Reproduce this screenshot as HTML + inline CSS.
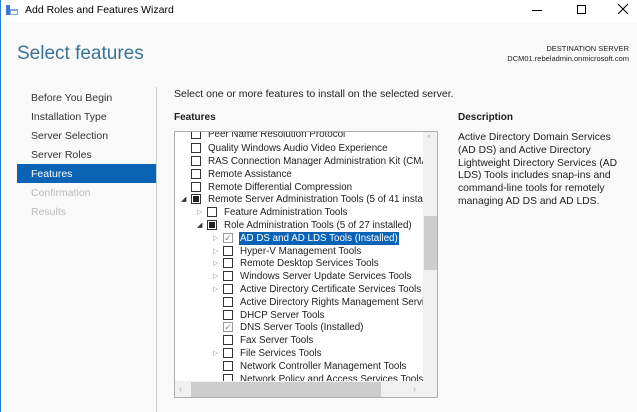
<!DOCTYPE html>
<html><head><style>
*{margin:0;padding:0;box-sizing:border-box}
body{width:637px;height:412px;background:#fff;font-family:"Liberation Sans",sans-serif;font-size:10.5px;color:#1e1e1e;position:relative;overflow:hidden}
.a{position:absolute;white-space:nowrap}
.nav{position:absolute;left:31px;font-size:10.5px;color:#333}
.row{position:absolute;height:13px;line-height:13px;white-space:nowrap;font-size:9.8px}
.cb{position:absolute;width:10px;height:10px;border:1px solid #333;background:#fff;top:1px}
.cb.f::after{content:"";position:absolute;left:1px;top:1px;width:6px;height:6px;background:#222}
.cb.g{border-color:#999}
.ar{position:absolute;top:0;font-size:7px;color:#999}
.ar.o{color:#333}
</style></head><body>
<div class="a" style="left:0;top:0;width:1px;height:412px;background:#2b7cd3"></div>
<div class="a" style="left:1px;top:0;width:636px;height:22px;background:#fff"></div>
<svg class="a" style="left:6px;top:5px" width="12" height="11"><rect x="0" y="0" width="4" height="10" fill="#3a7bc8"/><rect x="4" y="4" width="8" height="6" fill="#7aa6d8"/><rect x="5" y="6" width="6" height="3" fill="#fff"/></svg>
<div class="a" style="left:25px;top:4px;font-size:10.5px;color:#000">Add Roles and Features Wizard</div>
<div class="a" style="left:532px;top:10px;width:10px;height:1px;background:#000"></div>
<div class="a" style="left:577px;top:5px;width:9px;height:9px;border:1px solid #000"></div>
<svg class="a" style="left:618px;top:4px" width="10" height="10"><path d="M0 0L10 10M10 0L0 10" stroke="#000" stroke-width="1"/></svg>
<div class="a" style="left:1px;top:22px;width:636px;height:390px;background:#f9f9f9"></div>
<div class="a" style="left:17px;top:43px;font-size:19px;color:#3a7396">Select features</div>
<div class="a" style="right:8px;top:44px;font-size:7.5px;text-align:right;line-height:10px;color:#222">DESTINATION SERVER<br>DCM01.rebeladmin.onmicrosoft.com</div>
<div class="nav" style="top:92px">Before You Begin</div>
<div class="nav" style="top:111px">Installation Type</div>
<div class="nav" style="top:130px">Server Selection</div>
<div class="nav" style="top:149px">Server Roles</div>
<div class="a" style="left:17px;top:164px;width:139px;height:19px;background:#0b63b6"></div>
<div class="nav" style="top:168px;color:#fff">Features</div>
<div class="nav" style="top:187px;color:#bbb">Confirmation</div>
<div class="nav" style="top:206px;color:#bbb">Results</div>
<div class="a" style="left:156px;top:87px;width:1px;height:325px;background:#ccc"></div>
<div class="a" style="left:174px;top:88px">Select one or more features to install on the selected server.</div>
<div class="a" style="left:174px;top:112px;font-weight:bold;font-size:10px">Features</div>
<div class="a" style="left:458px;top:112px;font-weight:bold;font-size:10px">Description</div>
<div class="a" style="left:458px;top:132px;line-height:12.8px;font-size:10.3px">Active Directory Domain Services<br>(AD DS) and Active Directory<br>Lightweight Directory Services (AD<br>LDS) Tools includes snap-ins and<br>command-line tools for remotely<br>managing AD DS and AD LDS.</div>
<div class="a" style="left:174px;top:131px;width:264px;height:267px;border:1px solid #adadad;background:#fff;overflow:hidden">
<div style="position:absolute;left:0;top:0;width:248px;height:249px;overflow:hidden">
<div class="row" style="top:-4px;left:16px"><span class="cb" style="left:0"></span><span style="position:absolute;left:17px">Peer Name Resolution Protocol</span></div>
<div class="row" style="top:10px;left:16px"><span class="cb"></span><span style="position:absolute;left:17px">Quality Windows Audio Video Experience</span></div>
<div class="row" style="top:23px;left:16px"><span class="cb"></span><span style="position:absolute;left:17px">RAS Connection Manager Administration Kit (CMAK)</span></div>
<div class="row" style="top:36px;left:16px"><span class="cb"></span><span style="position:absolute;left:17px">Remote Assistance</span></div>
<div class="row" style="top:49px;left:16px"><span class="cb"></span><span style="position:absolute;left:17px">Remote Differential Compression</span></div>
<div class="row" style="top:61px;left:6px"><span class="ar o" style="left:0">◢</span><span class="cb f" style="left:10px"></span><span style="position:absolute;left:27px">Remote Server Administration Tools (5 of 41 installed)</span></div>
<div class="row" style="top:74px;left:22px"><span class="ar" style="left:0">▷</span><span class="cb" style="left:10px"></span><span style="position:absolute;left:27px">Feature Administration Tools</span></div>
<div class="row" style="top:87px;left:22px"><span class="ar o" style="left:0">◢</span><span class="cb f" style="left:10px"></span><span style="position:absolute;left:27px">Role Administration Tools (5 of 27 installed)</span></div>
<div class="row" style="top:100px;left:38px"><span class="ar" style="left:0">▷</span><span class="cb g" style="left:10px;font-size:9px;line-height:8px;color:#888;text-align:center">✓</span><span style="position:absolute;left:26px;top:0;background:#0b63b6;color:#fff;padding:0 1px;height:13px">AD DS and AD LDS Tools (Installed)</span></div>
<div class="row" style="top:113px;left:38px"><span class="ar" style="left:0">▷</span><span class="cb" style="left:10px"></span><span style="position:absolute;left:27px">Hyper-V Management Tools</span></div>
<div class="row" style="top:125px;left:38px"><span class="ar" style="left:0">▷</span><span class="cb" style="left:10px"></span><span style="position:absolute;left:27px">Remote Desktop Services Tools</span></div>
<div class="row" style="top:138px;left:38px"><span class="ar" style="left:0">▷</span><span class="cb" style="left:10px"></span><span style="position:absolute;left:27px">Windows Server Update Services Tools</span></div>
<div class="row" style="top:151px;left:38px"><span class="ar" style="left:0">▷</span><span class="cb" style="left:10px"></span><span style="position:absolute;left:27px">Active Directory Certificate Services Tools</span></div>
<div class="row" style="top:164px;left:38px"><span class="cb" style="left:10px"></span><span style="position:absolute;left:27px">Active Directory Rights Management Services Tools</span></div>
<div class="row" style="top:177px;left:38px"><span class="cb" style="left:10px"></span><span style="position:absolute;left:27px">DHCP Server Tools</span></div>
<div class="row" style="top:189px;left:38px"><span class="cb g" style="left:10px;font-size:9px;line-height:8px;color:#888;text-align:center">✓</span><span style="position:absolute;left:27px">DNS Server Tools (Installed)</span></div>
<div class="row" style="top:202px;left:38px"><span class="cb" style="left:10px"></span><span style="position:absolute;left:27px">Fax Server Tools</span></div>
<div class="row" style="top:215px;left:38px"><span class="ar" style="left:0">▷</span><span class="cb" style="left:10px"></span><span style="position:absolute;left:27px">File Services Tools</span></div>
<div class="row" style="top:228px;left:38px"><span class="cb" style="left:10px"></span><span style="position:absolute;left:27px">Network Controller Management Tools</span></div>
<div class="row" style="top:241px;left:38px"><span class="cb" style="left:10px"></span><span style="position:absolute;left:27px">Network Policy and Access Services Tools</span></div>
</div>
<div style="position:absolute;left:248px;top:0;width:15px;height:249px;background:#f0f0f0"></div>
<div style="position:absolute;left:249px;top:84px;width:13px;height:54px;background:#cdcdcd"></div>
<div style="position:absolute;left:252px;top:2px;font-size:8px;color:#aaa">^</div>
<div style="position:absolute;left:0;top:249px;width:263px;height:17px;background:#f0f0f0"></div>
<div style="position:absolute;left:16px;top:250px;width:190px;height:15px;background:#cdcdcd"></div>
<div style="position:absolute;left:4px;top:252px;font-size:9px;color:#aaa">‹</div>
<div style="position:absolute;left:238px;top:252px;font-size:9px;color:#aaa">›</div>
</div>
</body></html>
